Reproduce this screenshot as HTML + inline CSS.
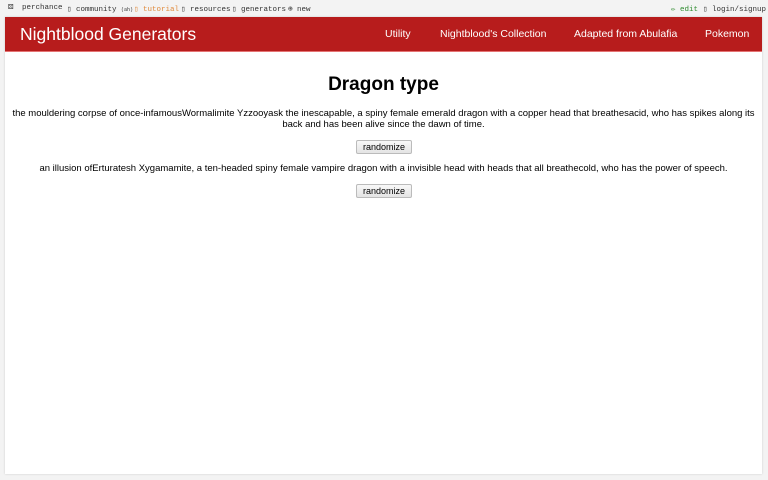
<!DOCTYPE html>
<html><head><style>
body{margin:0;width:768px;height:480px;background:#f3f3f3;font-family:"Liberation Sans",sans-serif;overflow:hidden;position:relative}
.top{position:absolute;top:0;left:0;right:0;height:16px;font-family:"Liberation Mono",monospace;font-size:7.5px;color:#333}
.top span{position:absolute;top:4px}
.card{position:absolute;left:5px;top:17px;width:757px;height:457px;background:#fff;box-shadow:0 0 2px #ccc}
.hdr{height:34px;background:#b71c1c;color:#fff;position:relative;border-bottom:1px solid #e57373}
.hdr .t{position:absolute;left:15px;top:7px;font-size:17.5px;font-family:"Liberation Sans",sans-serif}
.hdr .n{position:absolute;top:11px;font-size:10.5px;font-family:"Liberation Sans",sans-serif}
h1{text-align:center;font-size:19px;margin:0;position:absolute;top:57px;left:0;right:0}
p{font-size:9.5px;text-align:center;margin:0;position:absolute;left:0;right:0;line-height:11px}
button{position:absolute;left:351px;width:56px;height:14px;font-size:9px;font-family:"Liberation Sans",sans-serif;border:1px solid #bbb;border-radius:2px;background:linear-gradient(#f8f8f8,#e4e4e4);padding:0}
</style></head><body>
<div class="top">
<span style="left:8px;font-size:9px;top:2px">⚄</span>
<span style="left:22px">perchance</span>
<span style="left:67px">▯ community <small style="font-size:5px">(ah)</small></span>
<span style="left:134px;color:#e08a3c">▯ tutorial</span>
<span style="left:181px">▯ resources</span>
<span style="left:232px">▯ generators</span>
<span style="left:288px">⊕ new</span>
<span style="left:671px;color:#2e8b2e">✏ edit</span>
<span style="left:703px">▯ login/signup</span>
</div>
<div class="card">
<div class="hdr"><span class="t">Nightblood Generators</span>
<span class="n" style="left:380px">Utility</span>
<span class="n" style="left:435px">Nightblood's Collection</span>
<span class="n" style="left:569px">Adapted from Abulafia</span>
<span class="n" style="left:700px">Pokemon</span></div>
<h1>Dragon type</h1>
<p style="top:91px">the mouldering corpse of once-infamousWormalimite Yzzooyask the inescapable, a spiny female emerald dragon with a copper head that breathesacid, who has spikes along its back and has been alive since the dawn of time.</p>
<button style="top:123px">randomize</button>
<p style="top:146px">an illusion ofErturatesh Xygamamite, a ten-headed spiny female vampire dragon with a invisible head with heads that all breathecold, who has the power of speech.</p>
<button style="top:167px">randomize</button>
</div>
</body></html>
